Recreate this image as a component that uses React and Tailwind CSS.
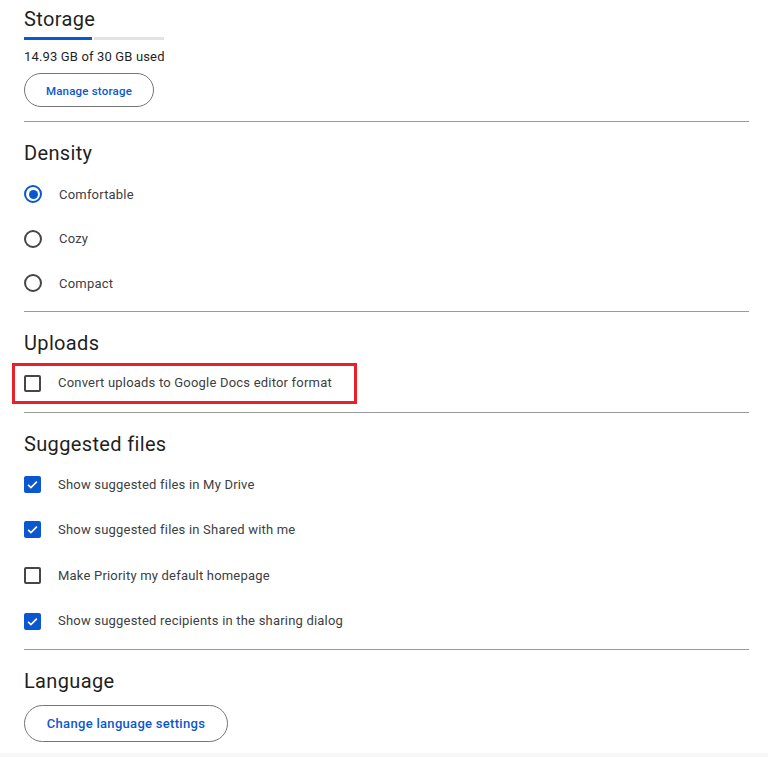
import React, { useState } from 'react';

const font = { fontFamily: 'Roboto, "Open Sans", Arial, sans-serif' };

function Heading({ children }) {
    return <h2 className="text-[20px] leading-[28px] tracking-[0.35px] text-[#1f1f1f] font-normal">{children}</h2>;
}

function Divider() {
    return <div className="h-px bg-[#9a9a9a] w-[725px]" />;
}

function Radio({ checked, label, onClick }) {
    return (
        <button onClick={onClick} className="flex items-center h-[44.5px] w-full text-left">
            <span
                className={`w-[18px] h-[18px] rounded-full border-2 flex items-center justify-center ${
                    checked ? 'border-[#0b57d0]' : 'border-[#444746]'
                }`}
            >
                {checked && <span className="w-[9px] h-[9px] rounded-full bg-[#0b57d0]" />}
            </span>
            <span className="ml-[17px] text-[13px] tracking-[0.2px] text-[#3c4043]">{label}</span>
        </button>
    );
}

function Checkbox({ checked, label, onClick }) {
    return (
        <button onClick={onClick} className="flex items-center h-full w-full text-left">
            <span
                className={`w-[17px] h-[17px] rounded-[2px] flex items-center justify-center ${
                    checked ? 'bg-[#0b57d0]' : 'border-2 border-[#444746]'
                }`}
            >
                {checked && (
                    <svg viewBox="0 0 24 24" className="w-[15px] h-[15px]" fill="none" stroke="white" strokeWidth="2.6">
                        <path d="M5 12.5l4.5 4.5L19 7.5" />
                    </svg>
                )}
            </span>
            <span className="ml-[17px] text-[13px] tracking-[0.2px] text-[#3c4043]">{label}</span>
        </button>
    );
}

export default function App() {
    const [density, setDensity] = useState('Comfortable');
    const [convert, setConvert] = useState(false);
    const [suggested, setSuggested] = useState({
        drive: true,
        shared: true,
        priority: false,
        recipients: true,
    });

    const toggle = (key) => setSuggested((s) => ({ ...s, [key]: !s[key] }));

    return (
        <div className="min-h-[757px] w-[768px] bg-white flex flex-col" style={font}>
            <div className="px-[24px] pt-[5px]">
                {/* Storage */}
                <Heading>Storage</Heading>
                <div className="mt-[4px] flex w-[140px] h-[3px]">
                    <div className="w-[68px] bg-[#0b57d0]" />
                    <div className="ml-[2px] flex-1 bg-[#e3e3e3]" />
                </div>
                <p className="mt-[9px] text-[13px] leading-[16px] tracking-[0.15px] text-[#1f1f1f]">14.93 GB of 30 GB used</p>
                <button className="mt-[8px] h-[34px] w-[130px] pt-[3px] rounded-full border border-[#747775] text-[11.5px] tracking-[0.2px] font-medium text-[#0b57d0]">
                    Manage storage
                </button>
                <div className="mt-[14px]">
                    <Divider />
                </div>

                {/* Density */}
                <div className="mt-[17px]">
                    <Heading>Density</Heading>
                </div>
                <div className="mt-[5px]">
                    {['Comfortable', 'Cozy', 'Compact'].map((d) => (
                        <Radio key={d} label={d} checked={density === d} onClick={() => setDensity(d)} />
                    ))}
                </div>
                <div className="mt-[5px]">
                    <Divider />
                </div>

                {/* Uploads */}
                <div className="mt-[17px]">
                    <Heading>Uploads</Heading>
                </div>
                <div className="relative mt-[6px] h-[41px]">
                    <div className="absolute -left-[12px] top-0 w-[345px] h-[41px] border-[3px] border-[#e8202a] pointer-events-none" />
                    <Checkbox label="Convert uploads to Google Docs editor format" checked={convert} onClick={() => setConvert(!convert)} />
                </div>
                <div className="mt-[8px]">
                    <Divider />
                </div>

                {/* Suggested files */}
                <div className="mt-[17px]">
                    <Heading>Suggested files</Heading>
                </div>
                <div className="mt-[4px]">
                    {[
                        { key: 'drive', label: 'Show suggested files in My Drive' },
                        { key: 'shared', label: 'Show suggested files in Shared with me' },
                        { key: 'priority', label: 'Make Priority my default homepage' },
                        { key: 'recipients', label: 'Show suggested recipients in the sharing dialog' },
                    ].map((item) => (
                        <div key={item.key} className="h-[45.6px]">
                            <Checkbox label={item.label} checked={suggested[item.key]} onClick={() => toggle(item.key)} />
                        </div>
                    ))}
                </div>
                <div className="mt-[5px]">
                    <Divider />
                </div>

                {/* Language */}
                <div className="mt-[17px]">
                    <Heading>Language</Heading>
                </div>
                <button className="mt-[10px] h-[37px] w-[204px] rounded-full border border-[#747775] text-[13px] tracking-[0.3px] font-medium text-[#0b57d0]">
                    Change language settings
                </button>
            </div>
            <div className="mt-[11px] flex-1 bg-[#f8f8f8]" />
        </div>
    );
}
